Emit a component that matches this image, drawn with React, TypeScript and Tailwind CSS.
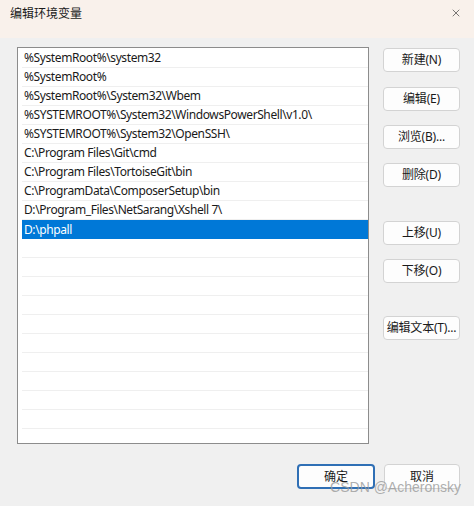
import { X } from "lucide-react";

const paths = [
  "%SystemRoot%\\system32",
  "%SystemRoot%",
  "%SystemRoot%\\System32\\Wbem",
  "%SYSTEMROOT%\\System32\\WindowsPowerShell\\v1.0\\",
  "%SYSTEMROOT%\\System32\\OpenSSH\\",
  "C:\\Program Files\\Git\\cmd",
  "C:\\Program Files\\TortoiseGit\\bin",
  "C:\\ProgramData\\ComposerSetup\\bin",
  "D:\\Program_Files\\NetSarang\\Xshell 7\\",
  "D:\\phpall",
];

const rows = [...paths, ...Array(12).fill("")];

function SideButton({ label, className = "" }: { label: string; className?: string }) {
  return (
    <button
      className={`h-[24px] w-[77px] rounded-[4px] border border-[#d3d3d3] bg-[#fdfdfd] text-[12px] tracking-[-0.2px] text-[#1a1a1a] ${className}`}
    >
      {label}
    </button>
  );
}

export default function App() {
  return (
    <div
      className="h-[506px] w-[474px] overflow-hidden bg-[#f0f0f0]"
      style={{ fontFamily: '"Noto Sans", "Noto Sans CJK SC", sans-serif' }}
    >
      {/* title bar */}
      <div className="flex h-[38px] items-start justify-between bg-[#f9f1eb] pl-[10px] pr-[12px] pt-[5px]">
        <span className="text-[12px] text-[#1a1a1a]">编辑环境变量</span>
        <X className="mt-[2px] h-[12px] w-[12px] text-[#333]" strokeWidth={1.3} />
      </div>

      <div className="flex pl-[17px] pt-[9px]">
        {/* path list */}
        <div className="h-[397px] w-[352px] overflow-hidden border border-[#8c8c8c] bg-white pl-[4px] pt-[1px]">
          {rows.map((p, i) => {
            const selected = i === 9;
            return (
              <div
                key={i}
                className={`flex h-[19px] items-center pl-[2px] text-[12px] leading-none tracking-[-0.4px] ${
                  selected ? "bg-[#0078d7] text-white" : "border-b border-[#efefef] text-[#1a1a1a]"
                }`}
              >
                {p}
              </div>
            );
          })}
        </div>

        {/* action buttons */}
        <div className="ml-[14px] flex flex-col">
          <SideButton label="新建(N)" className="mt-[1px]" />
          <SideButton label="编辑(E)" className="mt-[15px]" />
          <SideButton label="浏览(B)..." className="mt-[14px]" />
          <SideButton label="删除(D)" className="mt-[14px]" />
          <SideButton label="上移(U)" className="mt-[34px]" />
          <SideButton label="下移(O)" className="mt-[14px]" />
          <SideButton label="编辑文本(T)..." className="mt-[33px]" />
        </div>
      </div>

      {/* footer */}
      <div className="relative mt-[20px] flex justify-end gap-[9px] pr-[14px]">
        <button className="h-[25px] w-[78px] rounded-[4px] border-2 border-[#2f6fb5] bg-[#fdfdfd] text-[12px] text-[#1a1a1a]">
          确定
        </button>
        <button className="h-[25px] w-[76px] rounded-[4px] border border-[#d3d3d3] bg-[#fdfdfd] text-[12px] text-[#1a1a1a]">
          取消
        </button>
        <span
          className="absolute right-[13px] top-[16px] text-[14px] leading-none text-[#9a9a9a]/80"
          style={{ fontFamily: '"Liberation Sans", sans-serif' }}
        >
          CSDN @Acheronsky
        </span>
      </div>
    </div>
  );
}
